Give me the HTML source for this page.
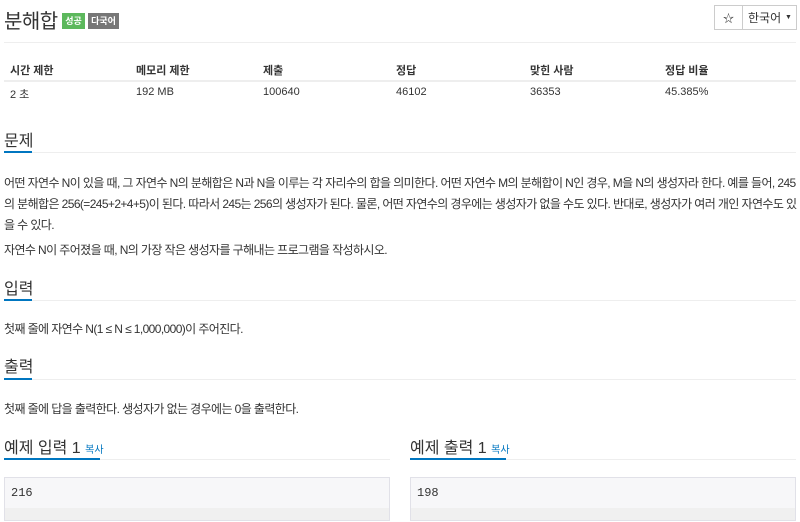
<!DOCTYPE html>
<html><head><meta charset="utf-8"><style>
body{margin:0;width:800px;height:522px;overflow:hidden;background:#fff;font-family:"Liberation Sans","Noto Sans CJK KR",sans-serif;color:#333}
.a{position:absolute;white-space:nowrap}
.t{font-size:20px;left:4px;top:5px;color:#333;letter-spacing:-0.5px}
.badge{position:absolute;top:13px;height:16px;font-size:9px;color:#fff;line-height:16px;text-align:center;font-weight:bold}
.hr{position:absolute;left:4px;right:4px;height:1px;background:#eee}
.th{font-size:11px;font-weight:bold;top:62px}
.td{font-size:11px;top:86px}
.h{font-size:16px;left:4px}
.ul{position:absolute;left:4px;height:2px;background:#0076c0}
.p{font-size:12px;left:4px;letter-spacing:-0.6px;color:#333}
.box{position:absolute;top:477px;height:42px;background:#f7f7f9;border:1px solid #e1e1e8}
.box span{position:absolute;left:6px;top:8px;font-family:"Liberation Mono",monospace;font-size:12px}
.sb{position:absolute;left:0;right:0;bottom:0;height:12px;background:#f0f0f0}
</style></head><body>
<div class="a t">분해합</div>
<div class="badge" style="left:62px;width:23px;background:#5cb85c">성공</div>
<div class="badge" style="left:88px;width:31px;background:#777">다국어</div>
<div style="position:absolute;left:714px;top:5px;width:81px;height:23px;border:1px solid #ccc;font-size:12px">
<span class="a" style="left:8px;top:4px;font-size:11px">☆</span>
<div style="position:absolute;left:27px;top:0;width:1px;height:23px;background:#ccc"></div>
<span class="a" style="left:33px;top:3px">한국어</span>
<span class="a" style="left:70px;top:8px;font-size:7px">▼</span>
</div>
<div class="hr" style="top:42px"></div>
<div class="a th" style="left:10px">시간 제한</div><div class="a th" style="left:136px">메모리 제한</div><div class="a th" style="left:263px">제출</div><div class="a th" style="left:396px">정답</div><div class="a th" style="left:530px">맞힌 사람</div><div class="a th" style="left:665px">정답 비율</div>
<div class="hr" style="top:80px;height:2px"></div>
<div class="a td" style="left:10px">2 초</div><div class="a td" style="left:136px">192 MB</div><div class="a td" style="left:263px">100640</div><div class="a td" style="left:396px">46102</div><div class="a td" style="left:530px">36353</div><div class="a td" style="left:665px">45.385%</div>
<div class="hr" style="top:152px"></div>
<div class="a h" style="top:127px">문제</div><div class="ul" style="top:151px;width:28px"></div>
<div class="a p" style="top:174px">어떤 자연수 N이 있을 때, 그 자연수 N의 분해합은 N과 N을 이루는 각 자리수의 합을 의미한다. 어떤 자연수 M의 분해합이 N인 경우, M을 N의 생성자라 한다. 예를 들어, 245</div>
<div class="a p" style="top:195px">의 분해합은 256(=245+2+4+5)이 된다. 따라서 245는 256의 생성자가 된다. 물론, 어떤 자연수의 경우에는 생성자가 없을 수도 있다. 반대로, 생성자가 여러 개인 자연수도 있</div>
<div class="a p" style="top:216px">을 수 있다.</div>
<div class="a p" style="top:241px">자연수 N이 주어졌을 때, N의 가장 작은 생성자를 구해내는 프로그램을 작성하시오.</div>
<div class="hr" style="top:300px"></div>
<div class="a h" style="top:275px">입력</div><div class="ul" style="top:299px;width:28px"></div>
<div class="a p" style="top:320px">첫째 줄에 자연수 N(1 ≤ N ≤ 1,000,000)이 주어진다.</div>
<div class="hr" style="top:379px"></div>
<div class="a h" style="top:353px">출력</div><div class="ul" style="top:378px;width:28px"></div>
<div class="a p" style="top:400px">첫째 줄에 답을 출력한다. 생성자가 없는 경우에는 0을 출력한다.</div>
<div class="hr" style="top:459px;right:410px"></div>
<div class="a h" style="top:434px">예제 입력 1 <span style="font-size:10px;color:#0076c0">복사</span></div><div class="ul" style="top:458px;width:96px"></div>
<div class="hr" style="top:459px;left:410px"></div>
<div class="a h" style="top:434px;left:410px">예제 출력 1 <span style="font-size:10px;color:#0076c0">복사</span></div><div class="ul" style="top:458px;left:410px;width:96px"></div>
<div class="box" style="left:4px;width:384px"><span>216</span><div class="sb"></div></div>
<div class="box" style="left:410px;width:384px"><span>198</span><div class="sb"></div></div>
</body></html>
